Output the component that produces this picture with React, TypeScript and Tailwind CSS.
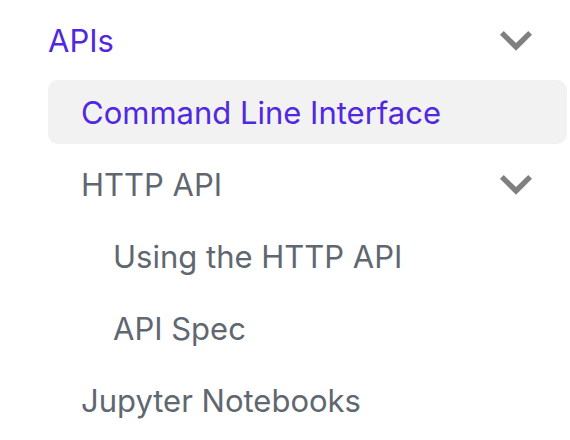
import React from "react";

const Chevron = () => (
  <svg viewBox="0 0 24 24" className="w-16 h-16 shrink-0" aria-hidden="true">
    <path fill="#808080" d="M7.41 8.59L12 13.17l4.59-4.58L18 10l-6 6-6-6z" />
  </svg>
);

export default function App() {
  return (
    <div
      className="w-[570px] h-[440px] bg-white overflow-hidden pt-2 pl-[48px] pr-[3px]"
      style={{ fontFamily: "Inter, 'Noto Sans', sans-serif" }}
    >
      <ul className="flex flex-col gap-2">
        <li className="h-16 flex items-center justify-between pr-[19px] rounded-[10px]">
          <span className="text-[31px] text-[#5028e0] leading-none">APIs</span>
          <Chevron />
        </li>
        <li className="h-16 flex items-center pl-[33px] rounded-[10px] bg-[#f2f2f2]">
          <span className="text-[31px] text-[#5028e0] leading-none">Command Line Interface</span>
        </li>
        <li className="h-16 flex items-center justify-between pl-[33px] pr-[19px] rounded-[10px]">
          <span className="text-[31px] text-[#606770] leading-none">HTTP API</span>
          <Chevron />
        </li>
        <li className="h-16 flex items-center pl-[65px] rounded-[10px]">
          <span className="text-[31px] text-[#606770] leading-none">Using the HTTP API</span>
        </li>
        <li className="h-16 flex items-center pl-[65px] rounded-[10px]">
          <span className="text-[31px] text-[#606770] leading-none">API Spec</span>
        </li>
        <li className="h-16 flex items-center pl-[33px] rounded-[10px]">
          <span className="text-[31px] text-[#606770] leading-none">Jupyter Notebooks</span>
        </li>
      </ul>
    </div>
  );
}
